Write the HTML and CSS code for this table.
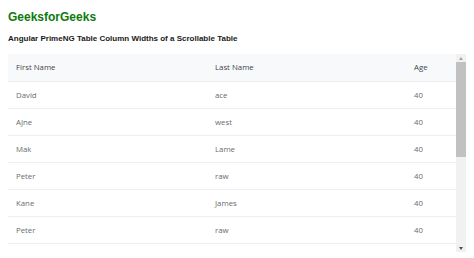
FILE: index.html
```html
<!DOCTYPE html>
<html>
<head>
<meta charset="utf-8">
<link rel="stylesheet" href="styles.css">
</head>
<body>
<h2 class="brand">GeeksforGeeks</h2>
<h4 class="subtitle">Angular PrimeNG Table Column Widths of a Scrollable Table</h4>
<div class="scroller">
  <div class="viewport">
    <table class="grid">
      <colgroup>
        <col class="c-first">
        <col class="c-last">
        <col class="c-age">
      </colgroup>
      <thead>
        <tr><th>First Name</th><th>Last Name</th><th>Age</th></tr>
      </thead>
      <tbody>
        <tr><td>David</td><td>ace</td><td>40</td></tr>
        <tr><td>AJne</td><td>west</td><td>40</td></tr>
        <tr><td>Mak</td><td>Lame</td><td>40</td></tr>
        <tr><td>Peter</td><td>raw</td><td>40</td></tr>
        <tr><td>Kane</td><td>James</td><td>40</td></tr>
        <tr><td>Peter</td><td>raw</td><td>40</td></tr>
      </tbody>
    </table>
  </div>
  <div class="scrollbar">
    <div class="sb-btn">
      <svg width="4" height="3" viewBox="0 0 4 3"><polygon points="2,0 4,3 0,3" fill="#a3a3a3"/></svg>
    </div>
    <div class="sb-thumb"></div>
    <div class="sb-track"></div>
    <div class="sb-btn">
      <svg width="4" height="3" viewBox="0 0 4 3"><polygon points="0,0 4,0 2,3" fill="#505050"/></svg>
    </div>
  </div>
</div>
</body>
</html>
```
FILE: styles.css
```css
html, body {
  margin: 0;
  padding: 0;
  background: #ffffff;
}
body {
  padding: 0 8px;
  font-family: "Liberation Sans", Arial, sans-serif;
}
.brand {
  margin: 10px 0 0;
  font-size: 12px;
  line-height: 14px;
  font-weight: bold;
  color: #0d7a0d;
}
.subtitle {
  margin: 10px 0 0;
  font-size: 8px;
  line-height: 10px;
  font-weight: bold;
  color: #1a1a1a;
}
.scroller {
  margin-top: 10px;
  height: 198px;
  display: flex;
}
.viewport {
  flex: 1;
  overflow: hidden;
}
.scrollbar {
  width: 10px;
  display: flex;
  flex-direction: column;
  background: #f1f1f1;
}
.sb-btn {
  height: 8px;
  display: flex;
  align-items: center;
  justify-content: center;
}
.sb-btn svg {
  display: block;
}
.sb-thumb {
  height: 95px;
  background: #c1c1c1;
}
.sb-track {
  flex: 1;
}
.grid {
  width: 448px;
  border-collapse: collapse;
  table-layout: fixed;
  font-family: "Open Sans", "Noto Sans", sans-serif;
  font-size: 7.8px;
}
.c-first { width: 199px; }
.c-last { width: 199px; }
.c-age { width: 50px; }
.grid th,
.grid td {
  height: 27px;
  box-sizing: border-box;
  padding: 0 8px;
  text-align: left;
  vertical-align: middle;
  border-bottom: 1px solid #eceef1;
}
.grid th {
  background: #f8f9fa;
  color: #3f454b;
  font-weight: normal;
}
.grid td {
  color: #666c72;
}
```
